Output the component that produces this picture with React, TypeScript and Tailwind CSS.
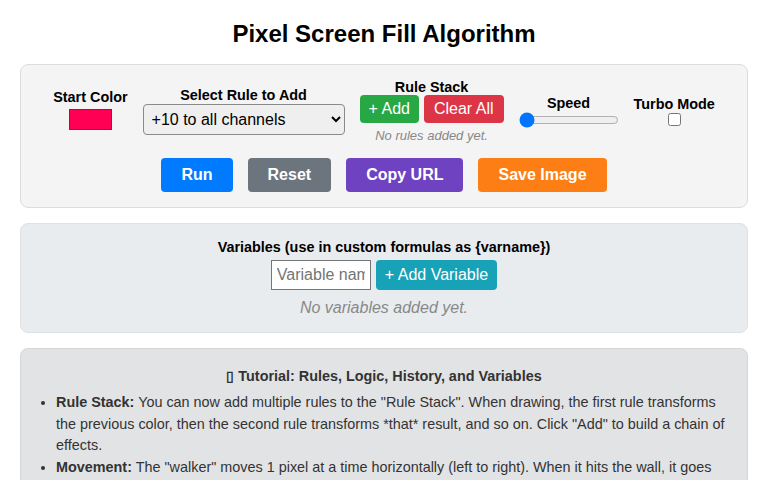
import React, { useState } from 'react';

const ruleOptions = [
  '+10 to all channels',
  '-10 to all channels',
  'Invert color',
  'Rotate hue',
  'Custom formula',
];

const App: React.FC = () => {
  const [color, setColor] = useState('#ff0055');
  const [rule, setRule] = useState(ruleOptions[0]);
  const [speed, setSpeed] = useState(1);
  const [turbo, setTurbo] = useState(false);
  const [varName, setVarName] = useState('');

  return (
    <div className="min-h-screen bg-white p-5 font-['Liberation_Sans',Arial,sans-serif] text-black">
      <h1 className="mb-[16px] text-center text-[24px] font-bold leading-[28px]">
        Pixel Screen Fill Algorithm
      </h1>

      <div className="flex flex-col gap-[15px] rounded-lg border border-[#dddddd] bg-[#f4f4f4] px-[15px] pb-[15px] pt-[14px]">
        <div className="flex flex-wrap items-center justify-center gap-[15px]">
          <div className="flex flex-col items-center">
            <label className="text-[14.4px] font-bold leading-[17px]">Start Color</label>
            <div className="flex h-[27px] w-[50px] items-center justify-center">
              <div className="h-[21px] w-[43px] border border-[#c8003c]" style={{ backgroundColor: color }}>
                <input
                  type="color"
                  value={color}
                  onChange={(e) => setColor(e.target.value)}
                  className="h-full w-full cursor-pointer opacity-0"
                />
              </div>
            </div>
          </div>

          <div className="flex flex-col items-center">
            <label className="text-[14.4px] font-bold leading-[17px]">Select Rule to Add</label>
            <select
              value={rule}
              onChange={(e) => setRule(e.target.value)}
              className="h-[31px] w-[202px] rounded-[4px] border border-[#8a8a8a] bg-[#efefef] px-[4px] text-[16px]"
            >
              {ruleOptions.map((opt) => (
                <option key={opt}>{opt}</option>
              ))}
            </select>
          </div>

          <div className="flex flex-col items-center">
            <label className="text-[14.4px] font-bold leading-[16px]">Rule Stack</label>
            <div className="flex gap-[5px]">
              <button className="h-[28px] rounded-[4px] bg-[#28a745] px-[9px] text-[16px] text-white">
                + Add
              </button>
              <button className="h-[28px] rounded-[4px] bg-[#dc3545] px-[10px] text-[16px] text-white">
                Clear All
              </button>
            </div>
            <div className="mt-[5px] text-[13px] italic leading-[15px] text-[#888888]">
              No rules added yet.
            </div>
          </div>

          <div className="flex flex-col items-center">
            <label className="text-[14.4px] font-bold leading-[17px]">Speed</label>
            <input
              type="range"
              min={1}
              max={100}
              value={speed}
              onChange={(e) => setSpeed(Number(e.target.value))}
              className="w-[100px]"
            />
          </div>

          <div className="flex flex-col items-center">
            <label className="text-[14.4px] font-bold leading-[17px]">Turbo Mode</label>
            <input
              type="checkbox"
              checked={turbo}
              onChange={(e) => setTurbo(e.target.checked)}
              className="h-[13px] w-[13px]"
            />
          </div>
        </div>

        <div className="flex flex-wrap justify-center gap-[15px]">
          <button className="h-[34px] rounded-[4px] bg-[#007bff] px-5 text-[16px] font-bold text-white">
            Run
          </button>
          <button className="h-[34px] rounded-[4px] bg-[#6c757d] px-5 text-[16px] font-bold text-white">
            Reset
          </button>
          <button className="h-[34px] rounded-[4px] bg-[#6f42c1] px-5 text-[16px] font-bold text-white">
            Copy URL
          </button>
          <button className="h-[34px] rounded-[4px] bg-[#fd7e14] px-5 text-[16px] font-bold text-white">
            Save Image
          </button>
        </div>
      </div>

      <div className="mt-[15px] flex flex-col items-center rounded-lg border border-[#dee2e6] bg-[#e9ecef] p-[15px]">
        <div className="text-[14.4px] font-bold leading-[17px]">
          Variables (use in custom formulas as {'{varname}'})
        </div>
        <div className="mt-[4px] flex gap-[5px]">
          <input
            type="text"
            value={varName}
            onChange={(e) => setVarName(e.target.value)}
            placeholder="Variable name"
            className="h-[30px] w-[100px] border border-[#767676] bg-white px-[5px] text-[16px] placeholder:text-[#757575]"
          />
          <button className="h-[30px] rounded-[4px] bg-[#17a2b8] px-[9px] text-[16px] text-white">
            + Add Variable
          </button>
        </div>
        <div className="mt-[9px] text-[16px] italic leading-[18px] text-[#888888]">
          No variables added yet.
        </div>
      </div>

      <div className="mt-[15px] rounded-lg border border-[#d6d6d6] bg-[#e2e3e5] px-[15px] pb-[15px] pt-[19px] text-[#333333]">
        <div className="mb-[7px] text-center text-[14.4px] font-bold leading-[17px]">
          ▯ Tutorial: Rules, Logic, History, and Variables
        </div>
        <ul className="list-disc pl-5 text-[14.4px] leading-[21.6px]">
          <li>
            <b>Rule Stack:</b> You can now add multiple rules to the "Rule Stack". When drawing, the
            first rule transforms the previous color, then the second rule transforms *that* result,
            and so on. Click "Add" to build a chain of effects.
          </li>
          <li>
            <b>Movement:</b> The "walker" moves 1 pixel at a time horizontally (left to right). When
            it hits the wall, it goes down one row and continues until the whole screen is filled.
          </li>
          <li>
            <b>History:</b> Each new pixel is computed from the color of the previous pixel, so the
            rules build on each other over time.
          </li>
        </ul>
      </div>
    </div>
  );
};

export default App;
